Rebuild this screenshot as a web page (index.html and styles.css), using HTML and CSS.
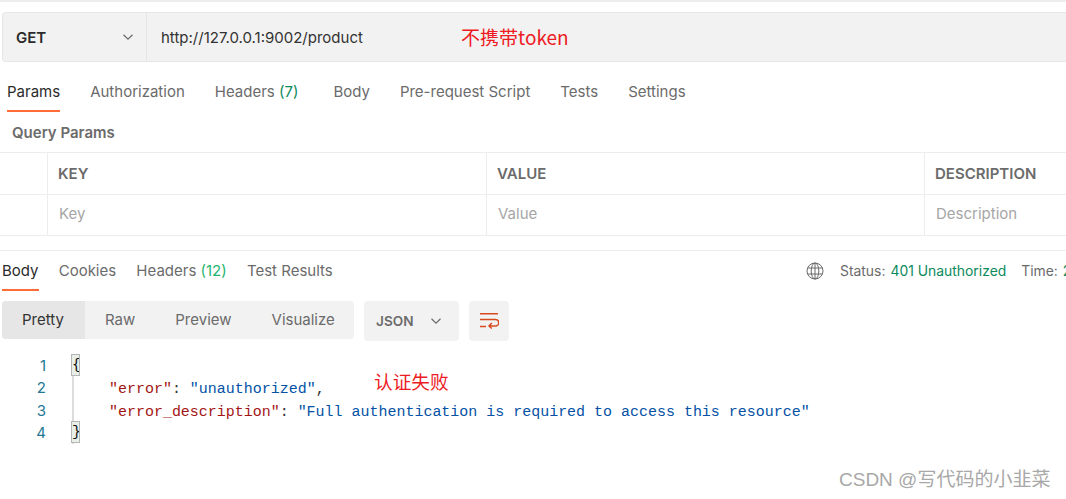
FILE: index.html
```html
<!DOCTYPE html>
<html lang="zh">
<head>
<meta charset="utf-8">
<title>Postman</title>
<link rel="stylesheet" href="styles.css">
</head>
<body>
<div class="page">
  <div class="top-rule"></div>
  <div class="url-bar">
    <div class="method"><span>GET</span>
      <svg class="chev" viewBox="0 0 12 12"><path d="M1.5 3.8 6 8.2l4.5-4.4"/></svg>
    </div>
    <div class="url">http://127.0.0.1:9002/product</div>
  </div>
  <nav class="req-tabs">
    <span class="tab active">Params</span>
    <span class="tab">Authorization</span>
    <span class="tab">Headers <em class="count">(7)</em></span>
    <span class="tab body-tab">Body</span>
    <span class="tab">Pre-request Script</span>
    <span class="tab">Tests</span>
    <span class="tab">Settings</span>
  </nav>
  <div class="qp-title">Query Params</div>
  <div class="table">
    <div class="row head">
      <div class="c0"></div><div class="c1">KEY</div><div class="c2">VALUE</div><div class="c3">DESCRIPTION</div>
    </div>
    <div class="row ph">
      <div class="c0"></div><div class="c1">Key</div><div class="c2">Value</div><div class="c3">Description</div>
    </div>
  </div>
  <div class="res-head">
    <nav class="res-tabs">
      <span class="tab active">Body</span>
      <span class="tab">Cookies</span>
      <span class="tab">Headers <em class="count bright">(12)</em></span>
      <span class="tab">Test Results</span>
    </nav>
    <div class="status">
      <svg class="globe" viewBox="0 0 18 18"><circle cx="9" cy="9" r="8"/><ellipse cx="9" cy="9" rx="3.8" ry="8"/><path d="M9 1v16M1.6 6h14.8M1.6 12h14.8"/></svg>
      <span class="st-label">Status:</span><span class="st-val">401 Unauthorized</span>
      <span class="st-label time">Time:</span><span class="st-val">2</span>
    </div>
  </div>
  <div class="toolbar">
    <div class="seg">
      <span class="seg-item on">Pretty</span>
      <span class="seg-item raw">Raw</span>
      <span class="seg-item prev">Preview</span>
      <span class="seg-item vis">Visualize</span>
    </div>
    <div class="fmt"><span>JSON</span>
      <svg class="chev" viewBox="0 0 12 12"><path d="M1.5 3.8 6 8.2l4.5-4.4"/></svg>
    </div>
    <div class="wrap-btn">
      <svg viewBox="0 0 20 18"><path d="M1 1.8h18M1 7.5h15.5a3 3 0 0 1 0 6.500H10M1 14.500h6M12.800 11 10 14l2.800 2.500"/></svg>
    </div>
  </div>
  <div class="code">
    <div class="gutter"><div>1</div><div>2</div><div>3</div><div>4</div></div>
    <div class="lines">
      <div class="ln"><span class="brace">{</span></div>
      <div class="ln ind"><span class="k">"error"</span>: <span class="s">"unauthorized"</span>,</div>
      <div class="ln ind"><span class="k">"error_description"</span>: <span class="s">"Full authentication is required to access this resource"</span></div>
      <div class="ln"><span class="brace">}</span></div>
    </div>
  </div>
  <div class="note note-token">不携带token</div>
  <div class="note note-auth">认证失败</div>
  <div class="mark">CSDN @写代码的小韭菜</div>
</div>
</body>
</html>
```

FILE: styles.css
```css
* { box-sizing: border-box; }
html, body { margin: 0; padding: 0; background: #fff; }
.page {
  position: relative;
  width: 1066px;
  height: 499px;
  overflow: hidden;
  font-family: Inter, "Noto Sans", sans-serif;
  font-size: 15px;
  color: #6b6b6b;
}
.top-rule { height: 2px; background: #ededed; }
.url-bar {
  display: flex;
  height: 50px;
  margin: 10px 0 0 2px;
  background: #f2f2f2;
  border: 1px solid #e6e6e6;
  border-right: 0;
  border-radius: 4px 0 0 4px;
}
.method {
  width: 144px;
  flex: none;
  display: flex;
  align-items: center;
  justify-content: space-between;
  padding: 0 12px 0 13px;
  font-weight: 600;
  color: #2b2b2b;
  border-right: 1px solid #e6e6e6;
}
.chev { width: 12px; height: 12px; fill: none; stroke: #6b6b6b; stroke-width: 1.2; }
.url { padding: 2px 0 0 14px; line-height: 46px; color: #333; }
.req-tabs { display: flex; height: 50px; padding: 20px 0 0 7px; gap: 30px; }
.tab { height: 30px; white-space: nowrap; line-height: 19px; }
.tab.active { color: #2b2b2b; border-bottom: 2px solid #ff6c37; }
.body-tab { margin-left: 5px; }
.count { font-style: normal; color: #0c8a5c; }
.count.bright { color: #1fb56e; }
.qp-title { height: 40px; padding: 12px 0 0 12px; font-weight: 600; color: #6b6b6b; line-height: 18px; }
.table { border-top: 1px solid #ededed; }
.row {
  display: grid;
  grid-template-columns: 47px 439px 438px 1fr;
  border-bottom: 1px solid #ededed;
}
.row.head { height: 42px; font-weight: 600; line-height: 41px; }
.row.ph { height: 41px; color: #a6a6a6; line-height: 37px; }
.row > div { padding-left: 10px; white-space: nowrap; overflow: hidden; }
.row > div + div { border-left: 1px solid #ededed; }
.row.ph > div + div { padding-left: 11px; }
.res-head {
  display: flex;
  justify-content: space-between;
  height: 51px;
  margin-top: 14px;
  border-top: 1px solid #ededed;
}
.res-tabs { display: flex; gap: 20.2px; padding: 10px 0 0 2px; }
.res-tabs .tab { height: 30px; }
.status { display: flex; align-items: center; height: 40px; width: 260px; flex: none; font-size: 13.9px; white-space: nowrap; }
.globe { width: 18px; height: 18px; margin-right: 16px; fill: none; stroke: #6b6b6b; stroke-width: 1; flex: none; }
.st-label { margin-right: 5px; }
.st-val { color: #0c8a5c; }
.time { margin-left: 15px; }
.toolbar { display: flex; padding-left: 2px; height: 40px; }
.seg {
  display: flex;
  width: 352px;
  height: 38px;
  background: #f2f2f2;
  border-radius: 4px;
  overflow: hidden;
  line-height: 38px;
}
.seg-item { white-space: nowrap; }
.seg-item.on { width: 83px; padding-left: 20px; background: #e6e6e6; color: #333; flex: none; }
.seg-item.raw { margin-left: 20px; }
.seg-item.prev { margin-left: 40px; }
.seg-item.vis { margin-left: 40px; }
.fmt {
  display: flex;
  align-items: center;
  justify-content: space-between;
  width: 95px;
  height: 40px;
  margin-left: 10px;
  padding: 0 17px 0 12px;
  background: #f2f2f2;
  border-radius: 4px;
  font-size: 13.6px;
  font-weight: 600;
}
.wrap-btn {
  display: flex;
  align-items: center;
  justify-content: center;
  width: 40px;
  height: 40px;
  margin-left: 10px;
  background: #f2f2f2;
  border-radius: 4px;
}
.wrap-btn svg { width: 20px; height: 18px; fill: none; stroke: #d9491f; stroke-width: 1.5; }
.code {
  display: flex;
  margin-top: 13px;
  font-family: "Liberation Mono", monospace;
  font-size: 14.98px;
  line-height: 24px;
  color: #333;
}
.gutter { width: 72px; padding-right: 26px; text-align: right; color: #237893; font-family: Inter, sans-serif; font-size: 15px; flex: none; }
.gutter > div { height: 22.4px; }
.lines { border-left: 2px solid #dcdcdc; }
.ln { height: 22.4px; white-space: pre; }
.ind { padding: 1px 0 0 35px; }
.k { color: #a31515; }
.s { color: #0451a5; }
.brace {
  display: inline-block;
  vertical-align: top;
  width: 9px;
  height: 22px;
  margin-left: -3px;
  background: #e8efe8;
  border: 1px solid #b5b5b5;
  line-height: 20px;
  text-align: center;
  overflow: hidden;
  color: #111;
}
.note {
  position: absolute;
  color: #ed1c24;
  font-family: "Noto Sans CJK SC", sans-serif;
  white-space: nowrap;
}
.note-token { left: 461px; top: 23px; font-size: 19px; line-height: 28px; }
.note-auth { left: 374px; top: 368px; font-size: 18.7px; line-height: 26px; }
.mark {
  position: absolute;
  left: 839px;
  top: 466px;
  font-family: "Liberation Sans", "Noto Sans CJK SC", sans-serif;
  font-size: 19px;
  line-height: 28px;
  color: #a8a8a8;
  white-space: nowrap;
}
```
